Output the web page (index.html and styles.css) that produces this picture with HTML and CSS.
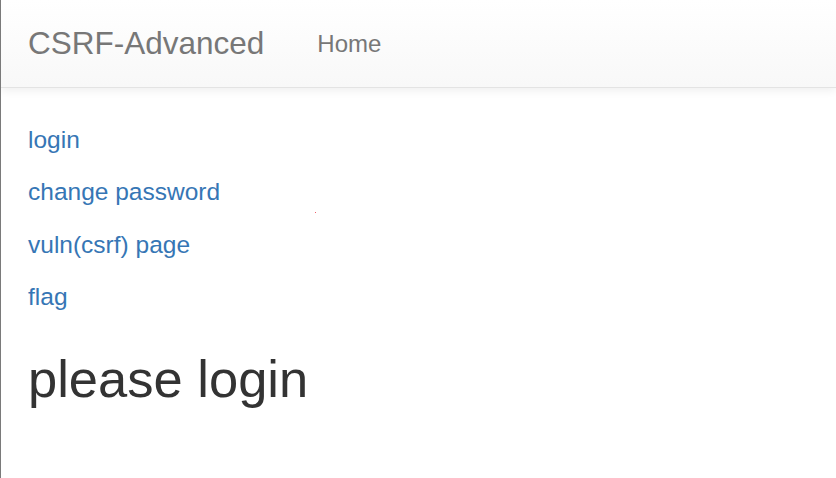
FILE: index.html
```html
<!DOCTYPE html>
<html lang="en">

<head>
    <meta charset="UTF-8">
    <meta name="viewport" content="width=device-width, initial-scale=1.0">
    <title>CSRF-Advanced</title>
    <link rel="stylesheet" href="styles.css">
</head>

<body>
    <nav class="navbar">
        <a class="navbar-brand" href="#">CSRF-Advanced</a>
        <ul class="nav">
            <li><a href="#">Home</a></li>
        </ul>
    </nav>

    <div class="container">
        <p><a href="#">login</a></p>
        <p><a href="#">change password</a></p>
        <p><a href="#">vuln(csrf) page</a></p>
        <p><a href="#">flag</a></p>

        <h2>please login</h2>
    </div>

    <span class="dot"></span>
</body>

</html>
```

FILE: styles.css
```css
/* General styles */
* {
    box-sizing: border-box;
    margin: 0;
    padding: 0;
}

html {
    border-left: 1px solid #7a7a7a;
    min-height: 100%;
}

body {
    position: relative;
    min-height: 478px;
    background-color: #fff;
    color: #333;
    font-family: 'Liberation Sans', Arial, sans-serif;
    font-size: 24.5px;
    line-height: 1.42857;
}

a {
    color: #3676b5;
    text-decoration: none;
}

/* Navbar */
.navbar {
    display: flex;
    height: 88px;
    padding: 0 26px;
    margin-bottom: 35px;
    background-image: linear-gradient(to bottom, #fff 0, #f8f8f8 100%);
    border-bottom: 1px solid #e3e3e3;
    box-shadow: 0 2px 9px rgba(0, 0, 0, 0.075);
}

.navbar-brand {
    margin-left: -25px;
    padding: 26px 26px 26px 26px;
    height: 87px;
    font-size: 31.5px;
    line-height: 35px;
    color: #777;
}

.nav {
    display: flex;
    list-style: none;
}

.nav a {
    display: block;
    padding: 26px 26px 26px 27px;
    line-height: 35px;
    font-size: 24px;
    color: #777;
}

/* Content */
.container {
    padding: 0 26px 0 27px;
}

.container p {
    margin-bottom: 17.5px;
}

h2 {
    margin-top: 35px;
    font-size: 52.5px;
    font-weight: 500;
    line-height: 1.1;
    color: #333;
}

.dot {
    position: absolute;
    left: 314px;
    top: 212px;
    width: 1px;
    height: 1px;
    background-color: #f0606b;
}
```
